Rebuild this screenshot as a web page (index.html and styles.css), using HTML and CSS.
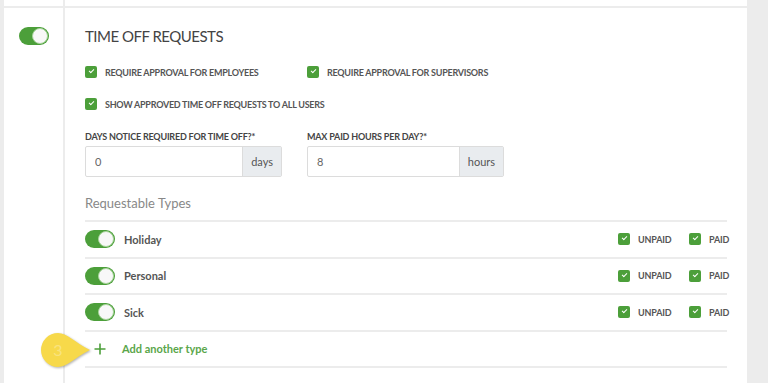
FILE: index.html
```html
<!DOCTYPE html>
<html lang="en">
<head>
  <meta charset="UTF-8">
  <meta name="viewport" content="width=device-width, initial-scale=1.0">
  <title>Time Off Requests</title>
  <link rel="stylesheet" href="styles.css">
</head>
<body>
  <div class="page">
    <div class="panel">
      <div class="top-row">
        <div class="side"></div>
        <div class="main"></div>
      </div>
      <div class="section">
        <div class="side">
          <span class="toggle"><span class="knob"></span></span>
        </div>
        <div class="main">
          <h2 class="title">TIME OFF REQUESTS</h2>

          <div class="check-row">
            <label class="check"><span class="box"></span>REQUIRE APPROVAL FOR EMPLOYEES</label>
            <label class="check"><span class="box"></span>REQUIRE APPROVAL FOR SUPERVISORS</label>
          </div>
          <div class="check-row">
            <label class="check"><span class="box"></span>SHOW APPROVED TIME OFF REQUESTS TO ALL USERS</label>
          </div>

          <div class="fields">
            <div class="field">
              <div class="field-label">DAYS NOTICE REQUIRED FOR TIME OFF?*</div>
              <div class="input-group">
                <input type="text" value="0">
                <span class="addon">days</span>
              </div>
            </div>
            <div class="field">
              <div class="field-label">MAX PAID HOURS PER DAY?*</div>
              <div class="input-group">
                <input type="text" value="8">
                <span class="addon">hours</span>
              </div>
            </div>
          </div>

          <h3 class="subtitle">Requestable Types</h3>
          <div class="types">
            <div class="type-row">
              <span class="toggle"><span class="knob"></span></span>
              <span class="type-name">Holiday</span>
              <label class="check small unpaid"><span class="box"></span>UNPAID</label>
              <label class="check small paid"><span class="box"></span>PAID</label>
            </div>
            <div class="type-row">
              <span class="toggle"><span class="knob"></span></span>
              <span class="type-name">Personal</span>
              <label class="check small unpaid"><span class="box"></span>UNPAID</label>
              <label class="check small paid"><span class="box"></span>PAID</label>
            </div>
            <div class="type-row">
              <span class="toggle"><span class="knob"></span></span>
              <span class="type-name">Sick</span>
              <label class="check small unpaid"><span class="box"></span>UNPAID</label>
              <label class="check small paid"><span class="box"></span>PAID</label>
            </div>
            <div class="type-row add-row">
              <svg class="plus" width="12" height="12" viewBox="0 0 12 12">
                <path d="M6 0.5V11.5M0.5 6H11.5" stroke="#4c9f3a" stroke-width="1.6" fill="none"/>
              </svg>
              <span class="add-text">Add another type</span>
              <!-- walkthrough step marker -->
              <span class="step">
                <svg width="52" height="38" viewBox="0 0 52 38">
                  <path d="M18 2 A17 17 0 1 0 18 36 C27 36 34 27 50 19 C34 11 27 2 18 2 Z" fill="#f7d94a"/>
                </svg>
                <span class="step-num">3</span>
              </span>
            </div>
          </div>
        </div>
      </div>
    </div>
    <div class="gutter"></div>
  </div>
</body>
</html>
```

FILE: styles.css
```css
body {
  margin: 0;
  background-color: #ececec;
  font-family: 'Lato', 'Open Sans', sans-serif;
  color: #555;
}
.page {
  display: flex;
  height: 383px;
  overflow: hidden;
  padding-left: 4px;
}
.panel {
  width: 743px;
  background-color: #fff;
}
.gutter {
  flex: 1;
}
.top-row {
  display: flex;
  height: 6px;
  border-bottom: 2px solid #ececec;
}
.side {
  width: 59px;
  border-right: 2px solid #ececec;
  flex-shrink: 0;
  display: flex;
  justify-content: center;
}
.section {
  display: flex;
  height: 400px;
}
.section .side {
  padding-top: 19px;
  align-items: flex-start;
}
.main {
  flex: 1;
  padding-left: 20px;
  padding-right: 20px;
}
.title {
  margin: 17px 0 0;
  font-size: 15px;
  font-weight: 400;
  letter-spacing: -0.5px;
  color: #444;
  line-height: 22px;
}

/* toggles */
.toggle {
  display: inline-block;
  width: 30px;
  height: 18px;
  border-radius: 9px;
  background-color: #4c9f3a;
  position: relative;
  flex-shrink: 0;
}
.toggle .knob {
  position: absolute;
  right: 1px;
  top: 1px;
  width: 14px;
  height: 14px;
  border-radius: 50%;
  border: 1px solid #a8d49c;
  background-color: #f8f8f8;
}

/* checkboxes */
.check-row {
  display: grid;
  grid-template-columns: 222px auto;
  margin-top: 15px;
  height: 20px;
  align-items: center;
}
.check-row + .check-row {
  margin-top: 12px;
}
.check {
  display: flex;
  align-items: center;
  font-size: 9px;
  font-weight: 700;
  color: #555;
  letter-spacing: -0.25px;
  white-space: nowrap;
}
.box {
  width: 12px;
  height: 12px;
  border-radius: 2px;
  background-color: #4c9f3a;
  margin-right: 8px;
  position: relative;
  flex-shrink: 0;
}
.box::after {
  content: '';
  position: absolute;
  left: 3.5px;
  top: 3px;
  width: 4px;
  height: 2px;
  border-left: 1.5px solid #fff;
  border-bottom: 1.5px solid #fff;
  transform: rotate(-45deg);
}

/* number fields */
.fields {
  display: flex;
  gap: 25px;
  margin-top: 17px;
}
.field-label {
  font-size: 9px;
  font-weight: 700;
  letter-spacing: -0.2px;
  color: #444;
  margin-bottom: 4px;
}
.input-group {
  display: flex;
  width: 197px;
  height: 31px;
  border: 1px solid #dcdcdc;
  border-radius: 2px;
  box-sizing: border-box;
}
.input-group input {
  flex: 1;
  min-width: 0;
  border: none;
  padding: 0 0 0 9px;
  font-family: inherit;
  font-size: 11px;
  color: #666;
  background: transparent;
}
.addon {
  display: flex;
  align-items: center;
  padding: 0 8px;
  background-color: #e9ecef;
  border-left: 1px solid #dcdcdc;
  font-size: 11px;
  color: #555;
}

/* requestable types */
.subtitle {
  margin: 18px 0 0;
  font-size: 13px;
  font-weight: 400;
  color: #888;
  line-height: 16px;
}
.types {
  margin-top: 9px;
  border-top: 2px solid #ececec;
}
.type-row {
  display: flex;
  align-items: center;
  height: 34.5px;
  border-bottom: 2px solid #ececec;
  position: relative;
}
.type-name {
  margin-left: 9px;
  flex: 1;
  font-size: 11px;
  font-weight: 700;
  color: #555;
}
.check.small {
  letter-spacing: -0.2px;
}
.check.unpaid {
  width: 50px;
}
.check.paid {
  width: 38px;
  margin-left: 21px;
}
.add-row {
  height: 34.5px;
}
.plus {
  display: block;
  margin-left: 9px;
  flex-shrink: 0;
}
.add-text {
  margin-left: 16px;
  font-size: 11px;
  font-weight: 700;
  color: #5aa64a;
}
.step {
  position: absolute;
  left: -45px;
  top: -1px;
  width: 52px;
  height: 38px;
}
.step svg {
  display: block;
  filter: drop-shadow(1px 1px 1px rgba(0,0,0,0.3));
}
.step-num {
  position: absolute;
  left: 0;
  top: 0;
  width: 36px;
  height: 38px;
  display: flex;
  align-items: center;
  justify-content: center;
  font-size: 16px;
  color: rgba(255,255,255,0.3);
}
```
